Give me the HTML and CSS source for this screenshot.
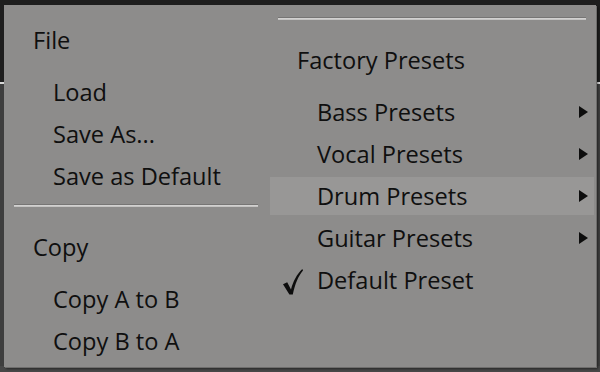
FILE: index.html
```html
<!DOCTYPE html>
<html>
<head>
<meta charset="utf-8">
<link rel="stylesheet" href="styles.css">
</head>
<body>
<div class="menu">
  <div class="col col-left">
    <div class="head">File</div>
    <div class="group">
      <div class="item">Load</div>
      <div class="item">Save As...</div>
      <div class="item">Save as Default</div>
    </div>
    <div class="sep sep-left"></div>
    <div class="head head-copy">Copy</div>
    <div class="group group-copy">
      <div class="item">Copy A to B</div>
      <div class="item">Copy B to A</div>
    </div>
  </div>
  <div class="col col-right">
    <div class="sep sep-right"></div>
    <div class="head head-factory">Factory Presets</div>
    <div class="group">
      <div class="sub"><span>Bass Presets</span><span class="arrow"></span></div>
      <div class="sub"><span>Vocal Presets</span><span class="arrow"></span></div>
      <div class="sub active"><span>Drum Presets</span><span class="arrow"></span></div>
      <div class="sub"><span>Guitar Presets</span><span class="arrow"></span></div>
      <div class="sub checked">
        <svg class="check" width="20" height="26" viewBox="0 0 20 26"><path d="M0 15.2 L4.2 13.2 L8 20.5 C10 12.5 14 5 19.3 0 L20 1.4 C15.2 7 12 15 9.8 25.5 L6.4 25.5 Z" fill="#0d0d0d"/></svg>
        <span>Default Preset</span>
      </div>
    </div>
  </div>
</div>
</body>
</html>
```
FILE: styles.css
```css
html, body {
  margin: 0;
  padding: 0;
}
body {
  width: 600px;
  height: 372px;
  overflow: hidden;
  padding: 5px 4px 0 4px;
  box-sizing: border-box;
  background: linear-gradient(to bottom, #1e1e1e 0 82px, #d8d8d8 82px 84px, #3e3e3e 84px 366px, #474747 366px);
  font-family: "Open Sans", "Noto Sans", sans-serif;
  font-size: 23.6px;
  color: #0f0f0f;
}
.menu {
  width: 592px;
  height: 362px;
  background: #8d8c8b;
  display: grid;
  grid-template-columns: 266px 326px;
  box-shadow: 1px 1px 0 #6e6d6c, 2px 2px 2px rgba(0,0,0,0.45);
}
.col {
  display: flex;
  flex-direction: column;
}
.group {
  display: flex;
  flex-direction: column;
}
.head, .item, .sub {
  height: 42px;
  line-height: 42px;
  white-space: nowrap;
}
.col-left {
  padding-top: 14px;
}
.col-left .head {
  padding-left: 29px;
}
.col-left .group {
  margin-top: 10px;
}
.col-left .item {
  padding-left: 49px;
}
.sep {
  height: 1px;
  border-top: 1px solid #767574;
  background: #d2d1d0;
  border-bottom: 1px solid #c4c3c2;
}
.sep-left {
  margin: 7px 12px 0 10px;
}
.head-copy {
  margin-top: 19px;
}
.group-copy {
  margin-top: 9px;
}
.col-right {
  padding-top: 12px;
}
.sep-right {
  margin: 0 10px 0 8px;
}
.head-factory {
  margin-top: 19px;
  padding-left: 27px;
}
.col-right .group {
  margin-top: 10px;
}
.sub {
  height: 38px;
  line-height: 38px;
  margin: 2px 2px 2px 0;
  padding-left: 47px;
  padding-right: 6px;
  display: flex;
  align-items: center;
  justify-content: space-between;
  position: relative;
}
.sub.active {
  background: #989796;
}
.arrow {
  width: 0;
  height: 0;
  border-top: 6.5px solid transparent;
  border-bottom: 6.5px solid transparent;
  border-left: 9px solid #0d0d0d;
}
.sub.checked {
  justify-content: flex-start;
}
.check {
  position: absolute;
  left: 13px;
  top: 8px;
}
```
